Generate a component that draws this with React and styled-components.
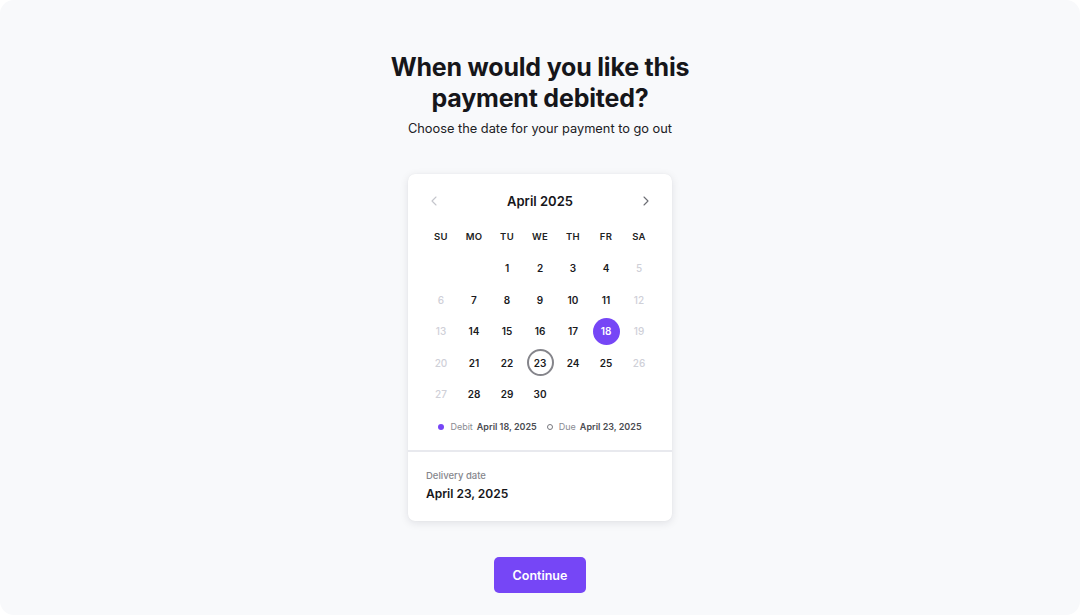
import styled, { createGlobalStyle } from "styled-components";
import { ChevronLeft, ChevronRight } from "lucide-react";

const Global = createGlobalStyle`
  * { box-sizing: border-box; }
  html, body {
    margin: 0;
    background: #ffffff;
    font-family: "Inter", "Noto Sans", sans-serif;
    color: #16161a;
  }
`;

const Page = styled.main`
  height: 615px;
  background: #f8f9fb;
  border-radius: 14px;
  display: flex;
  flex-direction: column;
  align-items: center;
  padding-top: 52px;
`;

const Title = styled.h1`
  margin: 0;
  font-size: 25px;
  line-height: 31px;
  font-weight: 700;
  text-align: center;
  letter-spacing: -0.2px;
  width: 320px;
`;

const Subtitle = styled.p`
  margin: 5px 0 0;
  font-size: 12.8px;
  line-height: 20px;
  color: #202024;
`;

const Card = styled.section`
  margin-top: 35px;
  width: 264px;
  background: #fff;
  border-radius: 7px;
  box-shadow: 0 2px 8px rgba(20, 20, 40, 0.1), 0 0 1px rgba(20, 20, 40, 0.08);
  overflow: hidden;
`;

const CalendarArea = styled.div`
  padding: 15px 16.5px 16px;
  border-bottom: 2px solid #e8e9ee;
`;

const Header = styled.div`
  height: 24px;
  display: flex;
  align-items: center;
  justify-content: space-between;
  padding: 0 1px;
`;

const Nav = styled.button`
  border: 0;
  background: none;
  padding: 0;
  display: flex;
  color: ${(p) => (p.$muted ? "#c4c5cc" : "#6c6d74")};
`;

const Month = styled.div`
  font-size: 13px;
  font-weight: 600;
`;

const Grid = styled.div`
  margin-top: 8px;
  display: grid;
  grid-template-columns: repeat(7, 33px);
  grid-auto-rows: 31.5px;
`;

const WeekDay = styled.div`
  display: flex;
  align-items: center;
  justify-content: center;
  font-size: 9.5px;
  font-weight: 600;
  letter-spacing: 0.3px;
  color: #222;
`;

const Day = styled.div`
  display: flex;
  align-items: center;
  justify-content: center;
`;

const DayNum = styled.span`
  width: 27px;
  height: 27px;
  border-radius: 50%;
  display: flex;
  align-items: center;
  justify-content: center;
  font-size: 10px;
  color: ${(p) => (p.$selected ? "#fff" : p.$muted ? "#cfd0d8" : "#1a1a1e")};
  font-weight: ${(p) => (p.$muted ? 500 : 600)};
  background: ${(p) => (p.$selected ? "#7646f6" : "transparent")};
  border: ${(p) => (p.$due ? "2px solid #85858b" : "none")};
`;

const Legend = styled.div`
  margin-top: 10px;
  display: flex;
  justify-content: center;
  gap: 10px;
  font-size: 9px;
  line-height: 14px;
`;

const LegendItem = styled.div`
  display: flex;
  align-items: center;
  gap: 4px;
  color: #8a8b92;
  b {
    color: #4b4c52;
    font-weight: 600;
  }
`;

const Dot = styled.span`
  width: 6px;
  height: 6px;
  border-radius: 50%;
  margin-right: 2px;
  background: ${(p) => (p.$hollow ? "transparent" : "#7646f6")};
  border: ${(p) => (p.$hollow ? "1.5px solid #77787e" : "none")};
`;

const Delivery = styled.div`
  padding: 17px 18px 17px;
`;

const DeliveryLabel = styled.div`
  font-size: 9.5px;
  line-height: 14px;
  color: #85868c;
  font-weight: 500;
`;

const DeliveryValue = styled.div`
  margin-top: 1px;
  font-size: 12px;
  line-height: 20px;
  font-weight: 600;
`;

const Continue = styled.button`
  margin-top: 36px;
  width: 92px;
  height: 36px;
  border: 0;
  border-radius: 5px;
  background: #7646f6;
  color: #fff;
  font-family: inherit;
  font-size: 12.5px;
  font-weight: 600;
`;

const weekDays = ["SU", "MO", "TU", "WE", "TH", "FR", "SA"];

export default function App() {
  const cells = [null, null];
  for (let d = 1; d <= 30; d++) cells.push(d);
  return (
    <>
      <Global />
      <Page>
        <Title>When would you like this payment debited?</Title>
        <Subtitle>Choose the date for your payment to go out</Subtitle>
        <Card>
          <CalendarArea>
            <Header>
              <Nav $muted aria-label="Previous month">
                <ChevronLeft size={16} strokeWidth={1.6} />
              </Nav>
              <Month>April 2025</Month>
              <Nav aria-label="Next month">
                <ChevronRight size={16} strokeWidth={1.6} />
              </Nav>
            </Header>
            <Grid>
              {weekDays.map((w) => (
                <WeekDay key={w}>{w}</WeekDay>
              ))}
              {cells.map((d, i) => {
                const col = i % 7;
                return (
                  <Day key={i}>
                    {d && (
                      <DayNum
                        $muted={col === 0 || col === 6}
                        $selected={d === 18}
                        $due={d === 23}
                      >
                        {d}
                      </DayNum>
                    )}
                  </Day>
                );
              })}
            </Grid>
            <Legend>
              <LegendItem>
                <Dot />
                Debit <b>April 18, 2025</b>
              </LegendItem>
              <LegendItem>
                <Dot $hollow />
                Due <b>April 23, 2025</b>
              </LegendItem>
            </Legend>
          </CalendarArea>
          <Delivery>
            <DeliveryLabel>Delivery date</DeliveryLabel>
            <DeliveryValue>April 23, 2025</DeliveryValue>
          </Delivery>
        </Card>
        <Continue>Continue</Continue>
      </Page>
    </>
  );
}
